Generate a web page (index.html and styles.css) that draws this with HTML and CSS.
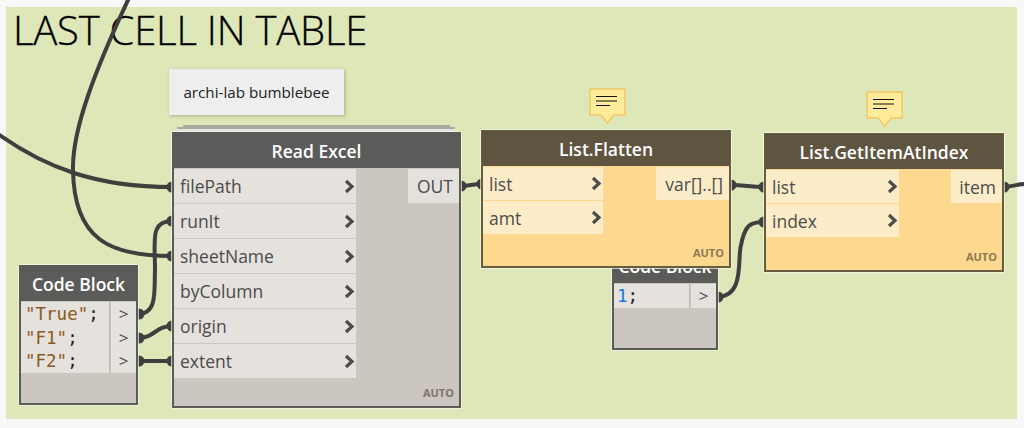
FILE: index.html
```html
<!DOCTYPE html>
<html lang="en">
<head>
<meta charset="utf-8">
<title>Last cell in table</title>
<link rel="stylesheet" href="styles.css">
</head>
<body>
<main class="canvas">
  <h1 class="title">LAST CELL IN TABLE</h1>
  <div class="label">archi-lab bumblebee</div>

  <svg class="wires" width="1024" height="428" viewBox="0 0 1024 428" aria-hidden="true">
    <g fill="none" stroke="#3f3f3f" stroke-width="4">
      <path d="M-2 134C46 168 96 187 172 187"/>
      <path d="M129 -2C95 70 72 130 73 170C74 240 110 256 172 256"/>
      <path d="M138 314C158 314 154 290 155 270C155 240 150 221 172 221"/>
      <path d="M138 338C155 338 155 326 172 326"/>
      <path d="M138 361L172 361"/>
      <path d="M461 186C470 186 472 184 482 184"/>
      <path d="M731 185C745 185 750 187 764 187"/>
      <path d="M1004 187C1012 187 1016 184 1026 184"/>
      <path d="M718 297C745 295 737 260 741 245C745 225 750 222 764 222"/>
    </g>
    <g fill="#3f3f3f">
      <circle cx="172" cy="187" r="5.500"/><circle cx="172" cy="221" r="5.500"/><circle cx="172" cy="256" r="5.500"/>
      <circle cx="172" cy="326" r="5.500"/><circle cx="172" cy="361" r="5.500"/><circle cx="139" cy="314" r="5.500"/>
      <circle cx="139" cy="338" r="5.500"/><circle cx="139" cy="361" r="5.500"/><circle cx="461" cy="186" r="5.500"/>
      <circle cx="482" cy="184" r="5.500"/><circle cx="731" cy="185" r="5.500"/><circle cx="764" cy="187" r="5.500"/>
      <circle cx="764" cy="222" r="5.500"/><circle cx="1004" cy="187" r="5.500"/><circle cx="718" cy="297" r="5.500"/>
    </g>
  </svg>

  <section class="node gray code code-mid">
    <header class="head">Code Block</header>
    <div class="code-rows">
      <div class="code-row"><span class="src"><b class="num">1</b>;</span><span class="out">&gt;</span></div>
    </div>
  </section>

  <section class="node gray code code-left">
    <header class="head">Code Block</header>
    <div class="code-rows">
      <div class="code-row"><span class="src"><i class="str">"True"</i>;</span><span class="out">&gt;</span></div>
      <div class="code-row"><span class="src"><i class="str">"F1"</i>;</span><span class="out">&gt;</span></div>
      <div class="code-row"><span class="src"><i class="str">"F2"</i>;</span><span class="out">&gt;</span></div>
    </div>
  </section>

  <div class="stack stack-back"></div>
  <div class="stack stack-front"></div>
  <section class="node gray read">
    <header class="head">Read Excel</header>
    <div class="body">
      <div class="inputs">
        <div class="port">filePath<svg class="chev" viewBox="0 0 11 15"><path d="M2 2l6 5.500-6 5.500"/></svg></div>
        <div class="port">runIt<svg class="chev" viewBox="0 0 11 15"><path d="M2 2l6 5.500-6 5.500"/></svg></div>
        <div class="port">sheetName<svg class="chev" viewBox="0 0 11 15"><path d="M2 2l6 5.500-6 5.500"/></svg></div>
        <div class="port">byColumn<svg class="chev" viewBox="0 0 11 15"><path d="M2 2l6 5.500-6 5.500"/></svg></div>
        <div class="port">origin<svg class="chev" viewBox="0 0 11 15"><path d="M2 2l6 5.500-6 5.500"/></svg></div>
        <div class="port">extent<svg class="chev" viewBox="0 0 11 15"><path d="M2 2l6 5.500-6 5.500"/></svg></div>
      </div>
      <div class="output">OUT</div>
    </div>
    <div class="auto">AUTO</div>
  </section>

  <svg class="note note-a" viewBox="0 0 37 37" aria-hidden="true"><path class="note-bg" d="M1 1H36V27H25L18.500 35 12 27H1Z"/><path class="note-ln" d="M7 8.500H28M7 13H28M7 17.500H21"/></svg>
  <section class="node yellow flatten">
    <header class="head">List.Flatten</header>
    <div class="body">
      <div class="inputs">
        <div class="port">list<svg class="chev" viewBox="0 0 11 15"><path d="M2 2l6 5.500-6 5.500"/></svg></div>
        <div class="port">amt<svg class="chev" viewBox="0 0 11 15"><path d="M2 2l6 5.500-6 5.500"/></svg></div>
      </div>
      <div class="output">var[]..[]</div>
    </div>
    <div class="auto">AUTO</div>
  </section>

  <svg class="note note-b" viewBox="0 0 37 37" aria-hidden="true"><path class="note-bg" d="M1 1H36V27H25L18.500 35 12 27H1Z"/><path class="note-ln" d="M7 8.500H28M7 13H28M7 17.500H21"/></svg>
  <section class="node yellow getitem">
    <header class="head">List.GetItemAtIndex</header>
    <div class="body">
      <div class="inputs">
        <div class="port">list<svg class="chev" viewBox="0 0 11 15"><path d="M2 2l6 5.500-6 5.500"/></svg></div>
        <div class="port">index<svg class="chev" viewBox="0 0 11 15"><path d="M2 2l6 5.500-6 5.500"/></svg></div>
      </div>
      <div class="output">item</div>
    </div>
    <div class="auto">AUTO</div>
  </section>
</main>
</body>
</html>
```
FILE: styles.css
```css
* { box-sizing: border-box; }
html, body { margin: 0; height: 100%; }
body {
  width: 1024px;
  height: 428px;
  overflow: hidden;
  background: #f8f8f8;
  font-family: "Open Sans", "Noto Sans", sans-serif;
  position: relative;
}
.canvas {
  position: absolute;
  left: 6px;
  top: 7px;
  width: 1011px;
  height: 412px;
  background: #dde7b7;
}
.title {
  position: absolute;
  left: 7px;
  top: -2px;
  margin: 0;
  font-size: 40px;
  line-height: 50px;
  font-weight: 300;
  color: #000;
  white-space: nowrap;
  letter-spacing: -0.22px;
  -webkit-text-stroke: 0.3px #000;
}
.label {
  position: absolute;
  left: 163px;
  top: 62px;
  width: 175px;
  height: 46px;
  background: #eeeeee;
  box-shadow: 1px 1px 3px rgba(120, 120, 90, 0.5);
  display: flex;
  align-items: center;
  justify-content: center;
  font-size: 15.200px;
  color: #222;
}
.wires {
  position: absolute;
  left: -6px;
  top: -7px;
  pointer-events: none;
}
.node {
  position: absolute;
  display: flex;
  flex-direction: column;
  border: 2px solid;
  outline: 1px solid rgba(245, 248, 225, 0.7);
}
.gray { background: #cbc6bf; border-color: #5b5b59; }
.yellow { background: #fcd98f; border-color: #665c40; }
.head {
  flex: none;
  height: 35px;
  display: flex;
  align-items: center;
  justify-content: center;
  color: #fff;
  font-size: 17.500px;
  font-weight: 600;
  margin: -1px -1px 1px;
}
.gray .head { background: #5b5b59; }
.yellow .head { background: #5e5440; }
.body {
  display: flex;
  justify-content: space-between;
  align-items: flex-start;
}
.inputs { display: flex; flex-direction: column; gap: 1px; }
.port {
  height: 34px;
  display: flex;
  align-items: center;
  justify-content: space-between;
  padding: 0 1px 0 6px;
  font-size: 17.500px;
  color: #4c4c4c;
  background: #e5e1dc;
}
.output {
  height: 34px;
  display: flex;
  align-items: center;
  justify-content: flex-end;
  padding: 0 6px 0 8px;
  font-size: 17.500px;
  color: #4c4c4c;
  background: #e5e1dc;
}
.yellow .port, .yellow .output { background: #fdecc8; }
.chev { width: 11px; height: 15px; flex: none; }
.chev path { fill: none; stroke: #4c4c4c; stroke-width: 3.200; }
.auto {
  position: absolute;
  right: 5px;
  bottom: 7px;
  font-size: 11px;
  line-height: 12px;
  font-weight: 700;
  color: #7c7466;
}
.yellow .auto { color: #8d7a52; }
.read { left: 166px; top: 125px; width: 289px; height: 276px; }
.read .inputs { width: 182px; }
.read .output { width: 51px; }
.flatten { left: 475px; top: 123px; width: 250px; height: 138px; }
.flatten .inputs { width: 120px; }
.flatten .port { height: 33px; }
.flatten .output { height: 33px; width: 73px; }
.getitem { left: 758px; top: 126px; width: 240px; height: 139px; }
.getitem .inputs { width: 133px; }
.getitem .port { height: 33px; }
.getitem .output { height: 33px; width: 51px; }
.stack {
  position: absolute;
  height: 10px;
  background: #e4e4e1;
  border-top: 2px solid #aaaaa5;
}
.stack-back { left: 177px; top: 118px; width: 267px; }
.stack-front { left: 171px; top: 120px; width: 278px; }
.code-left { left: 13px; top: 258px; width: 119px; height: 140px; }
.code-mid { left: 606px; top: 240px; width: 106px; height: 103px; }
.code-rows { display: flex; flex-direction: column; }
.code-row { display: flex; height: 23.500px; }
.src {
  flex: 1;
  background: #e5e1dc;
  border-right: 1px solid #bdb9b2;
  padding-left: 3px;
  font-family: "DejaVu Sans Mono", "Liberation Mono", monospace;
  font-size: 17.500px;
  line-height: 25px;
  color: #222;
}
.code-left .src { padding-left: 4px; }
.str { font-style: normal; color: #8a5a22; }
.num { font-weight: 400; color: #1479e0; }
.out {
  flex: none;
  width: 25px;
  margin-left: 1px;
  background: #e5e1dc;
  font-size: 17px;
  line-height: 23px;
  text-align: center;
  color: #4c4c4c;
}
.note { position: absolute; width: 37px; height: 37px; }
.note-a { left: 583px; top: 81px; }
.note-b { left: 860px; top: 84px; }
.note-bg { fill: #ffeb99; stroke: #f2c868; stroke-width: 1.500; }
.note-ln { fill: none; stroke: #111; stroke-width: 1; }
```
